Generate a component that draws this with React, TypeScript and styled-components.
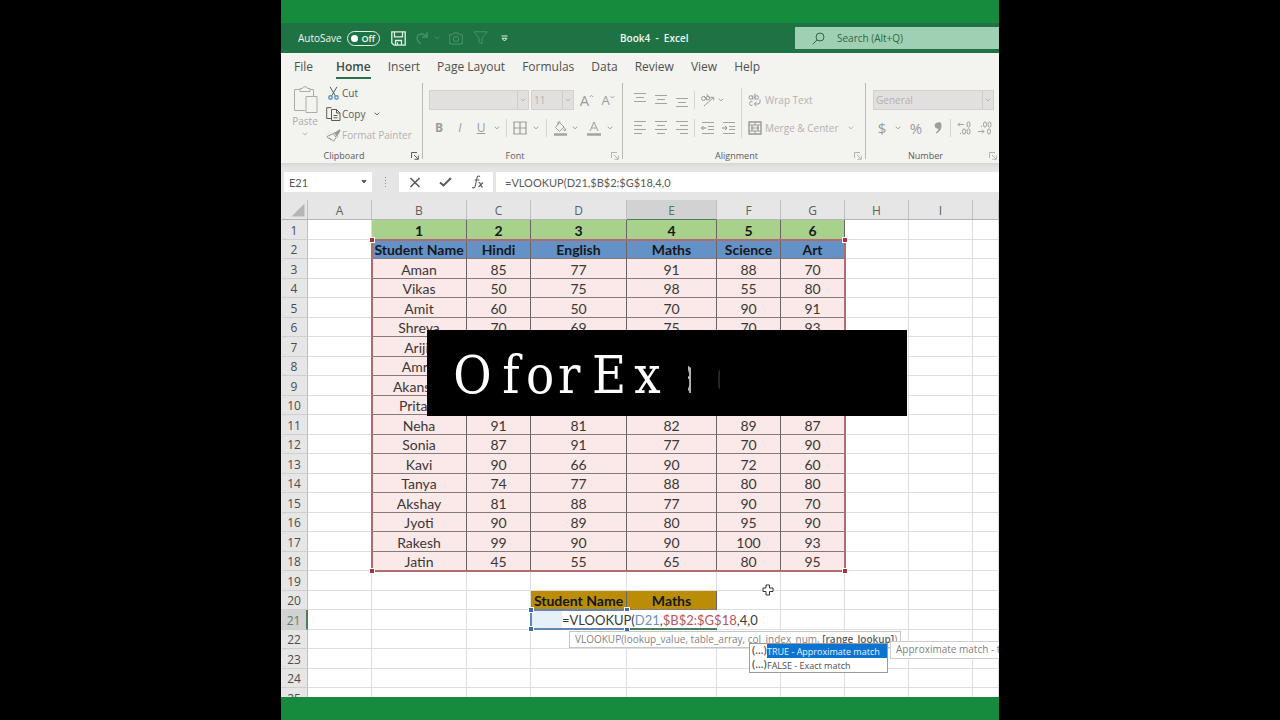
import React from "react";
import styled, { createGlobalStyle, css } from "styled-components";

const UI = `"Open Sans", "Noto Sans", sans-serif`;
const GRID = `Lato, "Open Sans", sans-serif`;
const LINE = "#a3a3a2";

const GlobalStyle = createGlobalStyle`
  * { box-sizing: border-box; }
  body { margin: 0; background: #000; font-family: ${UI}; }
  button, input, select { font: inherit; color: inherit; margin: 0; padding: 0; border: 0; background: none; }
  a { color: inherit; text-decoration: none; }
`;

const Stage = styled.div`
  display: flex;
  justify-content: center;
  height: 100vh;
  background: #000;
`;
const Clip = styled.main`
  position: relative;
  display: flex;
  flex-direction: column;
  width: 100%;
  max-width: 718px;
  overflow: hidden;
  background: #178b3d;
  padding: 23px 0;
`;

/* Title bar */
const TitleBar = styled.header`
  display: flex;
  align-items: center;
  flex: 0 0 30px;
  padding-left: 17px;
  background: #1f7244;
  color: #f1f8f3;
  font-size: 10px;
`;
const AutoSave = styled.label`
  display: flex;
  align-items: center;
  justify-content: space-between;
  width: 82px;
  margin-right: 5px;
  white-space: nowrap;
`;
const Toggle = styled.span`
  position: relative;
  display: flex;
  align-items: center;
  justify-content: flex-end;
  width: 33px;
  height: 15px;
  padding-right: 4px;
  border: 1px solid #e3f1e7;
  border-radius: 8px;
  font-size: 9px;
  font-weight: 600;
`;
const ToggleInput = styled.input`
  position: absolute;
  left: 3px;
  top: 3px;
  width: 7px;
  height: 7px;
  appearance: none;
  border-radius: 50%;
  && { background: #fff; }
`;
const BookName = styled.h1`
  flex: 1;
  margin: 0;
  padding-left: 101px;
  font-size: 10px;
  font-weight: 600;
  white-space: pre;
`;
const SearchBox = styled.label`
  display: flex;
  align-items: center;
  gap: 12px;
  width: 204px;
  height: 22px;
  padding-left: 17px;
  background: #9fd0b3;
  color: #2d6746;
`;
const SearchInput = styled.input`
  width: 140px;
  outline: 0;
  &::placeholder { color: #2d6746; opacity: 1; }
`;

/* Ribbon */
const Tabs = styled.nav`
  display: flex;
  flex: 0 0 27px;
  gap: 17px;
  padding: 4px 0 0 13px;
  background: #f3f3f0;
  color: #50504f;
  font-size: 12px;
  line-height: 19px;
`;
const Tab = styled.a<{ $active?: boolean }>`
  height: 22px;
  white-space: nowrap;
  ${(p) => p.$active && css`
    margin-left: 6px;
    color: #3f4a42;
    font-weight: 600;
    border-bottom: 2px solid #2b7049;
  `}
`;
const Ribbon = styled.section`
  display: flex;
  flex: 0 0 83px;
  background: #f3f3f0;
  color: #9d9c9b;
`;
const Group = styled.div<{ $w: number }>`
  display: flex;
  flex-direction: column;
  flex: 0 0 ${(p) => p.$w}px;
`;
const GroupBody = styled.div<{ $left: number }>`
  display: flex;
  height: 68px;
  padding-left: ${(p) => p.$left}px;
`;
const GroupFoot = styled.div<{ $on?: boolean }>`
  display: flex;
  align-items: center;
  height: 15px;
  padding-right: 3px;
  color: #5c5b5a;
  font-size: 9px;
  line-height: 15px;
  text-align: center;
  span { flex: 1; }
  button { display: flex; width: 12px; justify-content: flex-end; color: ${(p) => (p.$on ? "#5c5b5a" : "#b4b3b2")}; }
`;
const GroupLine = styled.div`
  flex: 0 0 1px;
  margin: 3px 0 4px;
  background: #b9b9b8;
`;
const Rows = styled.div`
  display: flex;
  flex-direction: column;
  gap: 8px;
  padding-top: 10px;
`;
const ToolRow = styled.div`
  display: flex;
  align-items: center;
  height: 20px;
`;
const Tool = styled.button<{ $w: number; $bright?: boolean }>`
  display: flex;
  align-items: center;
  justify-content: center;
  flex: 0 0 ${(p) => p.$w}px;
  height: 20px;
  ${(p) => p.$bright && css`&& { color: #e3f1e7; }`}
`;
const QuickAccess = styled.div`
  display: flex;
  align-items: center;
  color: #4a9268;
`;
const Letter = styled.span<{ $size?: number; $weight?: number }>`
  font-size: ${(p) => p.$size ?? 12}px;
  font-weight: ${(p) => p.$weight ?? 400};
  line-height: 16px;
`;
const Sep = styled.div<{ $h: number; $m: number }>`
  flex: 0 0 1px;
  height: ${(p) => p.$h}px;
  margin: 0 ${(p) => p.$m}px;
  background: #d6d5d4;
`;
const TallSep = styled(Sep)`
  margin-top: 8px;
`;
const PasteButton = styled.button`
  display: flex;
  flex-direction: column;
  align-items: center;
  width: 32px;
  height: 60px;
  && { padding-top: 6px; }
  && { color: #acabaa; }
  font-size: 10px;
  line-height: 14px;
  span { margin-bottom: 4px; }
`;
const ClipList = styled.div`
  display: flex;
  flex-direction: column;
  align-items: flex-start;
  gap: 1px;
  padding: 3px 0 0 3px;
`;
const TextTool = styled.button<{ $on?: boolean; $icon: number }>`
  display: flex;
  align-items: center;
  height: 20px;
  && {
    color: ${(p) => (p.$on ? "#5a5958" : "#b3b2b1")};
    font-size: 10px;
  }
  white-space: nowrap;
  i {
    display: flex;
    justify-content: center;
    width: ${(p) => p.$icon}px;
    color: ${(p) => (p.$on ? "#5a5958" : "#9a9998")};
  }
  em {
    display: flex;
    margin-left: 9px;
  }
`;
const Combo = styled.span<{ $w: number }>`
  display: flex;
  align-items: center;
  width: ${(p) => p.$w}px;
  height: 20px;
  margin-right: 2px;
  border: 1px solid #d3d1cf;
  background: #e2e0de;
  color: #b3b1af;
  font-size: 10px;
  select {
    flex: 1;
    min-width: 0;
    height: 18px;
    padding-left: 2px;
    appearance: none;
    opacity: 1;
  }
  i {
    display: flex;
    align-items: center;
    justify-content: center;
    width: 11px;
    height: 18px;
    border-left: 1px solid #cfcdcb;
  }
`;

/* Formula bar */
const FormulaBar = styled.section`
  display: flex;
  flex: 0 0 37px;
  padding: 9px 0 8px 3px;
  background: linear-gradient(#d6d6d6, #e5e5e5 5px);
  color: #5a5a5a;
  font-size: 11px;
`;
const NameBox = styled.div`
  display: flex;
  align-items: center;
  width: 88px;
  background: #fff;
  padding-right: 5px;
  input { flex: 1; min-width: 0; padding-left: 5px; font-family: ${GRID}; }
`;
const Dots = styled.div`
  display: flex;
  flex-direction: column;
  align-items: center;
  justify-content: center;
  gap: 2px;
  width: 27px;
  span { width: 1px; height: 1px; background: #8c8c8c; }
`;
const EntryButtons = styled.div`
  display: flex;
  justify-content: space-around;
  width: 94px;
  margin-right: 3px;
  background: #fff;
`;
const FormulaInput = styled.input`
  flex: 1;
  min-width: 0;
  && {
    padding-left: 9px;
    background: #fff;
    font-family: ${GRID};
  }
`;

/* Worksheet */
const Sheet = styled.section`
  position: relative;
  flex: 1;
  min-height: 0;
  overflow: hidden;
  background: #fff;
`;
const Grid = styled.table`
  width: 100%;
  table-layout: fixed;
  border-collapse: separate;
  border-spacing: 0;
  font-family: ${GRID};
  font-size: 14px;
  line-height: 17px;
  color: #3c3636;
  text-align: center;
  white-space: nowrap;
  th, td { padding: 1px 0 0; overflow: hidden; }
  thead tr { height: 20px; }
  tbody tr:nth-child(odd) { height: 20px; }
  tbody tr:nth-child(even) { height: 19px; }
`;
const ColHead = styled.th<{ $on?: boolean }>`
  border-right: 1px solid #bfbfbf;
  border-bottom: 1px solid ${(p) => (p.$on ? "#4a7d5b" : "#b4b4b4")};
  background: ${(p) => (p.$on ? "#d2d2d2" : "#e6e6e6")};
  color: ${(p) => (p.$on ? "#55725f" : "#5e5e5e")};
  font-family: ${UI};
  font-size: 12px;
  font-weight: 400;
  svg { display: block; margin-left: 10px; }
`;
const RowHead = styled.th<{ $on?: boolean }>`
  border-right: ${(p) => (p.$on ? "2px solid #4a7d5b" : "1px solid #bcbcbc")};
  border-bottom: 1px solid #cfcfcf;
  background: ${(p) => (p.$on ? "#d2d2d2" : "#e6e6e6")};
  color: ${(p) => (p.$on ? "#55805f" : "#4c4c4c")};
  font-family: ${UI};
  font-size: 12px;
  font-weight: 400;
`;
type Kind = "plain" | "green" | "blue" | "pink" | "gold";
const fills: Record<Kind, string> = {
  plain: "#fff",
  green: "#a8d18c",
  blue: "#6492c6",
  pink: "#fae9e8",
  gold: "#ba8c07",
};
const Cell = styled.td<{ $kind: Kind }>`
  border-right: 1px solid ${(p) => (p.$kind === "plain" ? "#dedede" : "#6a6464")};
  border-bottom: 1px solid ${(p) => (p.$kind === "plain" ? "#dedede" : "#837a7a")};
  background: ${(p) => fills[p.$kind]};
  ${(p) => (p.$kind === "green" || p.$kind === "blue" || p.$kind === "gold") && css`
    color: #14181c;
    font-weight: 700;
  `}
`;

/* Things drawn over the worksheet */
const RangeBox = styled.div`
  position: absolute;
  left: 90px;
  top: 39px;
  width: 475px;
  height: 333px;
  border: 2px solid #b06a70;
`;
const Handle = styled.span<{ $c: string; $x: "left" | "right"; $y: "top" | "bottom" }>`
  position: absolute;
  ${(p) => p.$x}: -3px;
  ${(p) => p.$y}: -3px;
  width: 4px;
  height: 4px;
  outline: 1px solid #fff;
  background: ${(p) => p.$c};
`;
const RefBox = styled.div`
  position: absolute;
  left: 249px;
  top: 409px;
  width: 97px;
  height: 21px;
  border: 2px solid #6486b4;
  border-right-width: 1px;
  background: #e6f0f9;
`;
const ActiveLine = styled.div`
  position: absolute;
  left: 346px;
  top: 428px;
  width: 90px;
  height: 2px;
  background: #4a7d5b;
`;
const Editor = styled.div`
  position: absolute;
  left: 281px;
  top: 411px;
  height: 17px;
  padding-right: 5px;
  background: #fff;
  color: #3a3a3a;
  font-family: ${GRID};
  font-size: 13px;
  line-height: 18px;
  white-space: nowrap;
  b { color: #6d8fbb; font-weight: 400; }
  i { color: #b8555a; font-style: normal; }
`;
const ArgTip = styled.div`
  position: absolute;
  left: 288px;
  top: 431px;
  width: 332px;
  height: 17px;
  padding-left: 5px;
  border: 1px solid #c6c6c6;
  background: #fff;
  color: #848484;
  font-size: 10px;
  line-height: 14px;
  white-space: nowrap;
  b { color: #5d5d5d; font-weight: 600; }
`;
const MatchTip = styled.div`
  position: absolute;
  left: 609px;
  top: 441px;
  width: 160px;
  height: 18px;
  padding-left: 5px;
  border: 1px solid #cdcdcd;
  background: #fff;
  color: #7f7f7f;
  font-size: 10px;
  line-height: 15px;
  white-space: nowrap;
`;
const MatchList = styled.ul`
  position: absolute;
  left: 468px;
  top: 443px;
  width: 139px;
  margin: 0;
  padding: 0;
  border: 1px solid #9a9a9a;
  background: #fff;
  list-style: none;
`;
const MatchItem = styled.li<{ $on?: boolean }>`
  display: flex;
  height: 14px;
  color: #4e4e4e;
  font-size: 9px;
  line-height: 15px;
  white-space: nowrap;
  span { width: 17px; padding-left: 2px; font-size: 10px; font-weight: 600; line-height: 12px; }
  p {
    flex: 1;
    margin: 0;
    ${(p) => p.$on && css`background: #0b74d0; color: #e9f3fc;`}
  }
`;
const Pointer = styled.div`
  position: absolute;
  left: 481px;
  top: 384px;
  color: #333;
  svg { display: block; }
`;
const Caption = styled.div`
  position: absolute;
  left: 146px;
  top: 330px;
  display: flex;
  width: 480px;
  height: 86px;
  padding-left: 22px;
  background: #000;
  color: #fff;
  font-family: "DejaVu Serif Condensed", "DejaVu Serif", serif;
  font-size: 52px;
  line-height: 90px;
`;
const CaptionLetter = styled.span<{ $w: number }>`
  display: flex;
  justify-content: center;
  flex: 0 0 ${(p) => p.$w}px;
`;
const Sliver = styled.span<{ $w: number; $from: number; $dim?: boolean }>`
  width: ${(p) => p.$w}px;
  margin-left: 27px;
  overflow: hidden;
  text-indent: -${(p) => p.$from}px;
  opacity: ${(p) => (p.$dim ? 0.15 : 0.7)};
`;

/* Icons */
const Svg = ({ w, h, children, sw = 1 }: { w: number; h: number; sw?: number; children: React.ReactNode }) => (
  <svg width={w} height={h} viewBox={`0 0 ${w} ${h}`} fill="none" stroke="currentColor" strokeWidth={sw} aria-hidden="true">
    {children}
  </svg>
);
const Chevron = () => <Svg w={6} h={4}><path d="M.8 .7 3 2.9 5.2 .7" /></Svg>;
const Launcher = () => <Svg w={8} h={8}><path d="M.5 6V.5H6M3 3l4 4M7.3 3.5v3.8H3.5" /></Svg>;
const Bars = ({ spans, top }: { spans: [number, number][]; top: number }) => (
  <Svg w={14} h={14}>
    <path stroke={LINE} strokeWidth="1.2" d={spans.map(([x, l], i) => `M${x} ${top + i * 4 - 0.5}h${l}`).join("")} />
  </Svg>
);
const Indent = ({ out }: { out?: boolean }) => (
  <Svg w={14} h={14}>
    <path d="M1 1.5h12M7 5.5h6M7 8.500h6M1 12.5h12" stroke={LINE} />
    <path d={out ? "M.5 7h5M2.500 5 .5 7l2 2" : "M0 7h5M3 5l2 2-2 2"} stroke="#8f8f8f" />
  </Svg>
);
const AngleText = () => (
  <Svg w={15} h={14}>
    <circle cx="3.500" cy="5.500" r="2" />
    <path d="M4 3 7 7M6.500 1 10 5.500" />
    <circle cx="8" cy="5" r="1.800" />
    <path d="M4 13 13.500 4.500M10.500 4.300h3.200v3.200" />
  </Svg>
);
const WrapIcon = () => (
  <Svg w={13} h={14}>
    <circle cx="2.800" cy="4.500" r="1.800" />
    <path d="M4.800 2.500v4M7 .5v6" />
    <circle cx="8.800" cy="4.500" r="1.800" />
    <path d="M4.500 8.800a2 2 0 1 0 0 3.400M12 6.500v2.500q0 2-2 2H6.500M8.500 8.800 6.300 11l2.200 2.200" />
  </Svg>
);
const MergeIcon = () => (
  <Svg w={14} h={14}>
    <path d="M1 1h12v12H1z" strokeWidth="1.400" />
    <path d="M1 4h12M1 10h12M4 4v6M10 4v6M7 1v3M7 10v3" />
    <path d="M3 7h8M5 5.500 3.500 7 5 8.500M9 5.500 10.500 7 9 8.500" />
  </Svg>
);
const DecimalIcon = ({ more }: { more?: boolean }) => (
  <Svg w={15} h={14}>
    {more ? (
      <>
        <path d="M1 3.500h6M3 1.500 1 3.500l2 2" stroke={LINE} />
        <ellipse cx="11.500" cy="3.500" rx="1.500" ry="2.700" />
        <path d="M3.500 13v-1.200" />
        <ellipse cx="7" cy="10.500" rx="1.500" ry="2.700" />
        <ellipse cx="11.500" cy="10.500" rx="1.500" ry="2.700" />
      </>
    ) : (
      <>
        <path d="M1 10.500h6M5 8.500l2 2-2 2" stroke={LINE} />
        <ellipse cx="12" cy="10.500" rx="1.500" ry="2.700" />
        <path d="M4.500 6V4.800" />
        <ellipse cx="8" cy="3.500" rx="1.500" ry="2.700" />
        <ellipse cx="12.500" cy="3.500" rx="1.500" ry="2.700" />
      </>
    )}
  </Svg>
);

const columns = ["A", "B", "C", "D", "E", "F", "G", "H", "I", ""];
const widths = [27, 64, 95, 64, 96, 90, 64, 64, 64, 64];
const marks: (string | number)[][] = [
  [1, 2, 3, 4, 5, 6],
  ["Student Name", "Hindi", "English", "Maths", "Science", "Art"],
  ["Aman", 85, 77, 91, 88, 70],
  ["Vikas", 50, 75, 98, 55, 80],
  ["Amit", 60, 50, 70, 90, 91],
  ["Shreya", 70, 69, 75, 70, 93],
  ["Arijit", "", "", "", "", ""],
  ["Amrit", "", "", "", "", ""],
  ["Akansha", "", "", "", "", ""],
  ["Pritam", "", "", "", "", ""],
  ["Neha", 91, 81, 82, 89, 87],
  ["Sonia", 87, 91, 77, 70, 90],
  ["Kavi", 90, 66, 90, 72, 60],
  ["Tanya", 74, 77, 88, 80, 80],
  ["Akshay", 81, 88, 77, 90, 70],
  ["Jyoti", 90, 89, 80, 95, 90],
  ["Rakesh", 99, 90, 90, 100, 93],
  ["Jatin", 45, 55, 65, 80, 95],
];

function cellAt(row: number, col: number): { kind: Kind; text: string | number } {
  if (row <= 18 && col >= 1 && col <= 6) {
    const kind = row === 1 ? "green" : row === 2 ? "blue" : "pink";
    return { kind, text: marks[row - 1][col - 1] };
  }
  if (row === 20 && col === 3) return { kind: "gold", text: "Student Name" };
  if (row === 20 && col === 4) return { kind: "gold", text: "Maths" };
  return { kind: "plain", text: "" };
}

const tabs = ["File", "Home", "Insert", "Page Layout", "Formulas", "Data", "Review", "View", "Help"];

const Title = () => (
  <TitleBar>
    <AutoSave>
      AutoSave
      <Toggle>
        <ToggleInput type="checkbox" />
        Off
      </Toggle>
    </AutoSave>
    <QuickAccess>
      <Tool $w={26} $bright aria-label="Save">
        <Svg w={15} h={15} sw={1.3}><path d="M.8 .8h13.400v13.400H3L.8 12zM3.500 .8v5h8v-5M4.500 14V9.500h6V14M6.500 11.500v2.500" /></Svg>
      </Tool>
      <Tool $w={22} aria-label="Redo">
        <Svg w={14} h={14} sw={1.4}><path d="M12 1v5H7M11.500 5.500C9 1.500 2 2.500 2 7.500c0 3 2.500 4 4 5.500" /></Svg>
      </Tool>
      <Tool $w={8} aria-label="Redo options"><Chevron /></Tool>
      <Tool $w={30} aria-label="Camera">
        <Svg w={14} h={13}><path d="M.7 2.500h3l1-1.500h4.600l1 1.500h3v9.500H.7z" /><circle cx="7" cy="7" r="2.700" /></Svg>
      </Tool>
      <Tool $w={18} aria-label="Filter">
        <Svg w={15} h={14}><path d="M.8 .8h13.400L9 7v6L6 11V7z" /></Svg>
      </Tool>
      <Tool $w={30} $bright aria-label="Customize Quick Access Toolbar">
        <Svg w={7} h={7}><path d="M.5 1h6M1 3.300h5L3.500 6z" /></Svg>
      </Tool>
    </QuickAccess>
    <BookName>{"Book4  -  Excel"}</BookName>
    <SearchBox>
      <Svg w={13} h={13}><circle cx="8" cy="5" r="4" /><path d="M5 8 .8 12.200" /></Svg>
      <SearchInput type="search" aria-label="Search" placeholder="Search (Alt+Q)" />
    </SearchBox>
  </TitleBar>
);

const ClipboardGroup = () => (
  <Group $w={141}>
    <GroupBody $left={8}>
      <PasteButton>
        <Svg w={25} h={28}>
          <path d="M7 3.500H1.500v21H12M17 3.500h3.500V10M7 5.500v-3h2.500q.3-1.800 2.500-1.800t2.500 1.800H17v3z" />
          <path d="M13 10.500h11v16H13z" />
        </Svg>
        <span>Paste</span>
        <Chevron />
      </PasteButton>
      <ClipList>
        <TextTool $on $icon={18}>
          <i><Svg w={11} h={14}><path d="M2 .8 7.500 10M9 .8 3.500 10" /><g stroke="#5b94c9" strokeWidth="1.400"><circle cx="2.500" cy="11.500" r="1.700" /><circle cx="8.500" cy="11.500" r="1.700" /></g></Svg></i>
          Cut
        </TextTool>
        <TextTool $on $icon={18}>
          <i><Svg w={15} h={14}><path d="M5 11.500H.7V.7H5.500M5.500 2.500h5l3.500 3.500v7.500H5.500zM10.500 2.500V6H14M7.500 8.500h4M7.500 10.800h4" /></Svg></i>
          Copy
          <em><Chevron /></em>
        </TextTool>
        <TextTool $icon={18}>
          <i>
            <Svg w={15} h={13}>
              <path d="M13.500 .8 9 4l2 2.800 3-5z" fill="currentColor" />
              <path d="M8.500 3.500 11.500 7.500l-1.200 1L7.200 4.500zM7 4.800 1 7.500l1.500 2L4 9l.5 2L6 10.500l1.500 1.700 2.500-3.500" />
            </Svg>
          </i>
          Format Painter
        </TextTool>
      </ClipList>
    </GroupBody>
    <GroupFoot $on><span>Clipboard</span><button aria-label="Clipboard settings"><Launcher /></button></GroupFoot>
  </Group>
);

const FontGroup = () => (
  <Group $w={199}>
    <GroupBody $left={6}>
      <Rows>
        <ToolRow>
          <Combo $w={100}>
            <select aria-label="Font" disabled><option value=""> </option></select>
            <i><Chevron /></i>
          </Combo>
          <Combo $w={43}>
            <select aria-label="Font size" disabled><option>11</option></select>
            <i><Chevron /></i>
          </Combo>
          <Tool $w={22} aria-label="Increase font size"><Letter $size={15}>A</Letter><Svg w={5} h={12}><path d="M.8 3 2.500 1.300 4.200 3" /></Svg></Tool>
          <Tool $w={20} aria-label="Decrease font size"><Letter $size={13}>A</Letter><Svg w={5} h={10}><path d="M.8 1.300 2.500 3 4.200 1.300" /></Svg></Tool>
        </ToolRow>
        <ToolRow>
          <Tool $w={20} aria-label="Bold"><Letter $weight={700}>B</Letter></Tool>
          <Tool $w={22} aria-label="Italic"><Letter as="em">I</Letter></Tool>
          <Tool $w={20} aria-label="Underline"><Letter as="u">U</Letter></Tool>
          <Tool $w={12} aria-label="Underline options"><Chevron /></Tool>
          <Sep $h={18} $m={3} />
          <Tool $w={20} aria-label="Borders"><Svg w={14} h={14} sw={1.2}><path d="M1 1h12v12H1zM7 1v12M1 7h12" /></Svg></Tool>
          <Tool $w={12} aria-label="Border options"><Chevron /></Tool>
          <Sep $h={18} $m={4} />
          <Tool $w={18} aria-label="Fill colour"><Svg w={15} h={15}><path d="M6.500 1.500 11 6l-4.500 4.500L2.500 6.500zM5 4V1h2.500M11.500 6.500q2 3 .5 3.300t-1-2" /><path d="M1 13.500h13" strokeWidth="2.500" stroke={LINE} /></Svg></Tool>
          <Tool $w={12} aria-label="Fill options"><Chevron /></Tool>
          <Tool $w={25} aria-label="Font colour"><Svg w={14} h={15}><path d="M3 10 7 1l4 9M4.500 7h5" /><path d="M0 13.500h14" strokeWidth="2.500" stroke={LINE} /></Svg></Tool>
          <Tool $w={8} aria-label="Font colour options"><Chevron /></Tool>
        </ToolRow>
      </Rows>
    </GroupBody>
    <GroupFoot><span>Font</span><button aria-label="Font settings"><Launcher /></button></GroupFoot>
  </Group>
);

const AlignmentGroup = () => (
  <Group $w={242}>
    <GroupBody $left={6}>
      <Rows>
        <ToolRow>
          <Tool $w={21} aria-label="Top align"><Bars top={1} spans={[[1, 12], [3, 8], [1, 12]]} /></Tool>
          <Tool $w={21} aria-label="Middle align"><Bars top={3} spans={[[1, 12], [3, 8], [1, 12]]} /></Tool>
          <Tool $w={21} aria-label="Bottom align"><Bars top={6} spans={[[1, 12], [3, 8], [1, 12]]} /></Tool>
          <Sep $h={18} $m={2} />
          <Tool $w={20} aria-label="Orientation"><AngleText /></Tool>
          <Tool $w={8} aria-label="Orientation options"><Chevron /></Tool>
        </ToolRow>
        <ToolRow>
          <Tool $w={21} aria-label="Align left"><Bars top={1} spans={[[1, 12], [1, 8], [1, 12], [1, 8]]} /></Tool>
          <Tool $w={21} aria-label="Center"><Bars top={1} spans={[[1, 12], [3, 8], [1, 12], [3, 8]]} /></Tool>
          <Tool $w={21} aria-label="Align right"><Bars top={1} spans={[[1, 12], [5, 8], [1, 12], [5, 8]]} /></Tool>
          <Sep $h={18} $m={2} />
          <Tool $w={21} aria-label="Decrease indent"><Indent out /></Tool>
          <Tool $w={21} aria-label="Increase indent"><Indent /></Tool>
        </ToolRow>
      </Rows>
      <TallSep $h={50} $m={2} />
      <Rows>
        <TextTool $icon={21}><i><WrapIcon /></i>Wrap Text</TextTool>
        <TextTool $icon={21}><i><MergeIcon /></i>Merge &amp; Center<em><Chevron /></em></TextTool>
      </Rows>
    </GroupBody>
    <GroupFoot><span>Alignment</span><button aria-label="Alignment settings"><Launcher /></button></GroupFoot>
  </Group>
);

const NumberGroup = () => (
  <Group $w={134}>
    <GroupBody $left={7}>
      <Rows>
        <ToolRow>
          <Combo $w={121}>
            <select aria-label="Number format" disabled><option>General</option></select>
            <i><Chevron /></i>
          </Combo>
        </ToolRow>
        <ToolRow>
          <Tool $w={18} aria-label="Currency"><Letter $size={15}>$</Letter></Tool>
          <Tool $w={14} aria-label="Currency options"><Chevron /></Tool>
          <Tool $w={22} aria-label="Percent"><Letter $size={15}>%</Letter></Tool>
          <Tool $w={21} aria-label="Comma style"><Svg w={8} h={12}><path d="M4 1a2.600 2.600 0 0 0-.5 5.200q1 0 1.700-.4Q5 9 2 11 7 9 7 4T4 1z" fill="currentColor" /></Svg></Tool>
          <Sep $h={18} $m={2} />
          <Tool $w={22} aria-label="Increase decimal"><DecimalIcon more /></Tool>
          <Tool $w={18} aria-label="Decrease decimal"><DecimalIcon /></Tool>
        </ToolRow>
      </Rows>
    </GroupBody>
    <GroupFoot><span>Number</span><button aria-label="Number settings"><Launcher /></button></GroupFoot>
  </Group>
);

export default function App() {
  return (
    <>
      <GlobalStyle />
      <Stage>
        <Clip>
          <Title />
          <Tabs>
            {tabs.map((t) => (
              <Tab key={t} href="#" $active={t === "Home"}>{t}</Tab>
            ))}
          </Tabs>
          <Ribbon>
            <ClipboardGroup />
            <GroupLine />
            <FontGroup />
            <GroupLine />
            <AlignmentGroup />
            <GroupLine />
            <NumberGroup />
          </Ribbon>
          <FormulaBar>
            <NameBox>
              <input aria-label="Name box" defaultValue="E21" />
              <Svg w={6} h={4}><path d="M1 .5h4L3 3z" fill="currentColor" /></Svg>
            </NameBox>
            <Dots><span /><span /><span /><span /></Dots>
            <EntryButtons>
              <Tool $w={26} aria-label="Cancel"><Svg w={12} h={11} sw={1.6}><path d="M1.500 1 10.500 10M10.500 1 1.500 10" /></Svg></Tool>
              <Tool $w={26} aria-label="Enter"><Svg w={13} h={10} sw={2}><path d="M1 5.500 4.500 8.500 12 1" /></Svg></Tool>
              <Tool $w={26} aria-label="Insert function">
                <Svg w={13} h={14} sw={1.1}><path d="M9 1.500Q6.500 0 5.800 3.500L4.300 11Q3.800 13.700 1 12.500M3.500 5h5M7.500 7.500l1.200.3 2 4 1.300.2M12 7.500 7.500 12" /></Svg>
              </Tool>
            </EntryButtons>
            <FormulaInput aria-label="Formula bar" defaultValue="=VLOOKUP(D21,$B$2:$G$18,4,0" />
          </FormulaBar>
          <Sheet>
            <Grid>
              <colgroup>
                {widths.map((w, i) => <col key={i} width={w} />)}
                <col />
              </colgroup>
              <thead>
                <tr>
                  <ColHead aria-label="Select all"><Svg w={14} h={14}><path d="M13.500 .5v13H.5z" fill="#b5b5b5" stroke="none" /></Svg></ColHead>
                  {columns.map((c, i) => <ColHead key={i} scope="col" $on={c === "E"}>{c}</ColHead>)}
                </tr>
              </thead>
              <tbody>
                {Array.from({ length: 25 }, (_, r) => r + 1).map((row) => (
                  <tr key={row}>
                    <RowHead scope="row" $on={row === 21}>{row}</RowHead>
                    {columns.map((_, col) => {
                      const { kind, text } = cellAt(row, col);
                      return <Cell key={col} $kind={kind}>{text}</Cell>;
                    })}
                  </tr>
                ))}
              </tbody>
            </Grid>
            <RangeBox>
              <Handle $c="#a8323c" $x="left" $y="top" />
              <Handle $c="#a8323c" $x="right" $y="top" />
              <Handle $c="#a8323c" $x="left" $y="bottom" />
              <Handle $c="#a8323c" $x="right" $y="bottom" />
            </RangeBox>
            <ActiveLine />
            <RefBox>
              <Handle $c="#3d6ba8" $x="left" $y="top" />
              <Handle $c="#3d6ba8" $x="right" $y="top" />
              <Handle $c="#3d6ba8" $x="left" $y="bottom" />
              <Handle $c="#3d6ba8" $x="right" $y="bottom" />
            </RefBox>
            <Editor>=VLOOKUP(<b>D21</b>,<i>$B$2:$G$18</i>,4,0</Editor>
            <ArgTip>VLOOKUP(lookup_value, table_array, col_index_num, <b>[range_lookup]</b>)</ArgTip>
            <MatchTip>Approximate match - the</MatchTip>
            <MatchList>
              <MatchItem $on><span>(...)</span><p>TRUE - Approximate match</p></MatchItem>
              <MatchItem><span>(...)</span><p>FALSE - Exact match</p></MatchItem>
            </MatchList>
            <Pointer>
              <Svg w={12} h={12}><path d="M4 1h3.500v3H11v3.500H7.500V11H4V7.500H1V4h3z" fill="#fff" /></Svg>
            </Pointer>
          </Sheet>
          <Caption>
            <CaptionLetter $w={47}>O</CaptionLetter>
            <CaptionLetter $w={30}>f</CaptionLetter>
            <CaptionLetter $w={24}>o</CaptionLetter>
            <CaptionLetter $w={30}>r</CaptionLetter>
            <CaptionLetter $w={50}>E</CaptionLetter>
            <CaptionLetter $w={26}>x</CaptionLetter>
            <Sliver $w={3} $from={17}>a</Sliver>
            <Sliver $w={2} $from={3} $dim>c</Sliver>
          </Caption>
        </Clip>
      </Stage>
    </>
  );
}
